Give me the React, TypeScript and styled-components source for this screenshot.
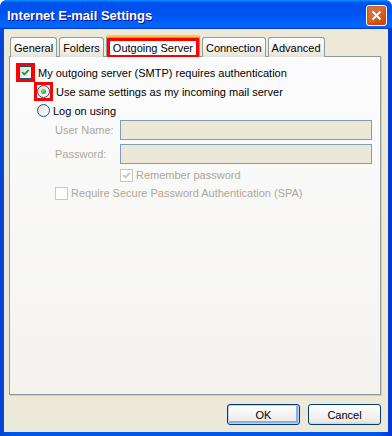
import styled, { createGlobalStyle } from "styled-components";

const GlobalStyle = createGlobalStyle`
  html, body {
    margin: 0;
    padding: 0;
    background: #ffffff;
  }
  body {
    font-family: "Liberation Sans", Arial, sans-serif;
    font-size: 11px;
    color: #000;
  }
`;

const Window = styled.div`
  width: 392px;
  height: 436px;
  display: flex;
  flex-direction: column;
  background: #0054e3;
  border-radius: 7px 7px 0 0;
  overflow: hidden;
`;

const TitleBar = styled.div`
  height: 29px;
  flex: none;
  display: flex;
  align-items: center;
  justify-content: space-between;
  padding: 0 5px 0 7px;
  background: linear-gradient(180deg, #0997ff, #0053ee 8%, #0050ee 40%, #06f 88%, #06f 93%, #005bff 95%, #003dd7 96%, #003dd7);
`;

const Title = styled.span`
  font-family: "Liberation Sans", Arial, sans-serif;
  font-weight: bold;
  font-size: 13px;
  color: #fff;
  text-shadow: 1px 1px #0f1089;
  margin-top: 2px;
`;

const CloseButton = styled.div`
  width: 21px;
  height: 21px;
  box-sizing: border-box;
  border: 1px solid #fff;
  border-radius: 3px;
  display: flex;
  align-items: center;
  justify-content: center;
  background: radial-gradient(circle at 90% 90%, #cc4600 0%, #dc6527 55%, #cd7546 70%),
    linear-gradient(#e27f57, #c73f18);
  box-shadow: inset 0 -1px 2px 1px #da4600;
  margin-top: 1px;
`;

const Frame = styled.div`
  flex: 1;
  display: flex;
  padding: 0 4px 4px;
  background: linear-gradient(90deg, #0842d5, #0055ea 3%, #0055ea 97%, #0832d0);
`;

const Body = styled.div`
  flex: 1;
  display: flex;
  flex-direction: column;
  background: #ece9d8;
  padding: 6px 7px 0 5px;
`;

const TabStrip = styled.div`
  display: flex;
  align-items: flex-end;
  height: 22px;
  padding-left: 1px;
  gap: 2px;
  position: relative;
  z-index: 1;
`;

const Tab = styled.div`
  height: 20px;
  box-sizing: border-box;
  padding: 0 3px;
  display: flex;
  align-items: center;
  border: 1px solid #919b9c;
  border-bottom: none;
  border-radius: 3px 3px 0 0;
  background: linear-gradient(#fefefe, #f4f3ee 60%, #e4e2d8);
  white-space: nowrap;
`;

const ActiveTab = styled.div`
  height: 22px;
  box-sizing: border-box;
  display: flex;
  border-top: 2px solid #ffc83c;
  border-left: 1px solid #919b9c;
  border-right: 1px solid #919b9c;
  border-radius: 3px 3px 0 0;
  background: #fcfcfe;
  box-shadow: inset 0 1px #e68b2c;
  padding-top: 1px;
`;

const Highlight = styled.div`
  flex: 1;
  display: flex;
  align-items: center;
  padding: 0 3px;
  border: 3px solid #ff0000;
  border-bottom-width: 2px;
  background: #fff;
  white-space: nowrap;
`;

const Panel = styled.div`
  flex: 1;
  margin-top: -1px;
  border: 1px solid #919b9c;
  box-shadow: 1px 1px #d0cec4;
  background: linear-gradient(#fcfcfe, #f4f3ee);
  padding: 6px 8px 0 9px;
  display: flex;
  flex-direction: column;
`;

const Row = styled.div<{ $indent?: number; $h?: number }>`
  display: flex;
  align-items: center;
  height: ${(p) => p.$h ?? 19}px;
  padding-left: ${(p) => p.$indent ?? 0}px;
`;

const Label = styled.span<{ $disabled?: boolean }>`
  margin-left: 3px;
  white-space: nowrap;
  color: ${(p) => (p.$disabled ? "#aca899" : "#000")};
`;

const FieldLabel = styled.span`
  white-space: nowrap;
  color: #aca899;
`;

const RedBox = styled.div`
  border: 3px solid #ff0000;
  margin-left: -3px;
  display: flex;
`;

const Box = styled.div<{ $disabled?: boolean }>`
  width: 13px;
  height: 13px;
  box-sizing: border-box;
  border: 1px solid ${(p) => (p.$disabled ? "#cac8bb" : "#1c5180")};
  background: ${(p) => (p.$disabled ? "#fff" : "linear-gradient(135deg, #dcdcd7, #fff)")};
  display: flex;
  align-items: center;
  justify-content: center;
`;

const Radio = styled.div`
  width: 13px;
  height: 13px;
  box-sizing: border-box;
  border-radius: 50%;
  border: 1px solid #1c5180;
  background: linear-gradient(135deg, #dcdcd7, #fff);
  display: flex;
  align-items: center;
  justify-content: center;
`;

const Dot = styled.div`
  width: 5px;
  height: 5px;
  border-radius: 50%;
  background: radial-gradient(circle at 35% 35%, #6de36d, #21a121);
`;

const Fields = styled.div`
  display: grid;
  grid-template-columns: 65px 1fr;
  row-gap: 4px;
  padding-left: 36px;
  align-items: center;
`;

const Input = styled.div`
  height: 20px;
  box-sizing: border-box;
  border: 1px solid #7f9db9;
  background: #ebe8d7;
`;

const Footer = styled.div`
  height: 37px;
  flex: none;
  display: flex;
  justify-content: flex-end;
  gap: 8px;
  padding-top: 9px;
  box-sizing: border-box;
`;

const Button = styled.div<{ $default?: boolean }>`
  width: 73px;
  height: 21px;
  box-sizing: border-box;
  border: 1px solid #003c74;
  border-radius: 3px;
  display: flex;
  align-items: center;
  justify-content: center;
  background: linear-gradient(#fff, #ecebe6 86%, #d6d0c5);
  box-shadow: ${(p) =>
    p.$default ? "inset 0 0 0 1px #bcd4f6, inset -1px -1px 0 2px #89ade4" : "none"};
`;

const Check = ({ color }: { color: string }) => (
  <svg width="9" height="9" viewBox="0 0 9 9">
    <path d="M1.2 4.2 L3.4 6.4 L7.8 1.8" fill="none" stroke={color} strokeWidth="1.9" />
  </svg>
);

const App = () => {
  return (
    <>
      <GlobalStyle />
      <Window>
        <TitleBar>
          <Title>Internet E-mail Settings</Title>
          <CloseButton>
            <svg width="11" height="11" viewBox="0 0 11 11">
              <path d="M1.5 1.5 L9.5 9.5 M9.5 1.5 L1.5 9.5" stroke="#fff" strokeWidth="2" />
            </svg>
          </CloseButton>
        </TitleBar>
        <Frame>
          <Body>
            <TabStrip>
              <Tab>General</Tab>
              <Tab>Folders</Tab>
              <ActiveTab>
                <Highlight>Outgoing Server</Highlight>
              </ActiveTab>
              <Tab>Connection</Tab>
              <Tab>Advanced</Tab>
            </TabStrip>
            <Panel>
              <Row>
                <RedBox>
                  <Box>
                    <Check color="#21a121" />
                  </Box>
                </RedBox>
                <Label>My outgoing server (SMTP) requires authentication</Label>
              </Row>
              <Row $indent={18}>
                <RedBox>
                  <Radio>
                    <Dot />
                  </Radio>
                </RedBox>
                <Label>Use same settings as my incoming mail server</Label>
              </Row>
              <Row $indent={18}>
                <Radio />
                <Label>Log on using</Label>
              </Row>
              <Fields>
                <FieldLabel>User Name:</FieldLabel>
                <Input />
                <FieldLabel>Password:</FieldLabel>
                <Input />
              </Fields>
              <Row $indent={101} $h={18} style={{ marginTop: 2 }}>
                <Box $disabled>
                  <Check color="#cac8bb" />
                </Box>
                <Label $disabled>Remember password</Label>
              </Row>
              <Row $indent={36} $h={18}>
                <Box $disabled />
                <Label $disabled>Require Secure Password Authentication (SPA)</Label>
              </Row>
            </Panel>
            <Footer>
              <Button $default>OK</Button>
              <Button>Cancel</Button>
            </Footer>
          </Body>
        </Frame>
      </Window>
    </>
  );
};

export default App;
